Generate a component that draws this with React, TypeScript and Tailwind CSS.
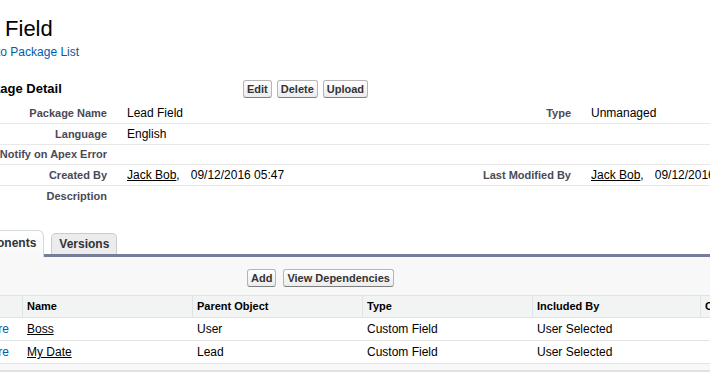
import React from 'react';

const Btn: React.FC<{ children: React.ReactNode }> = ({ children }) => (
  <button className="h-[18px] px-[3px] border border-[#b5b5b5] border-b-[#7f7f7f] rounded-[3px] bg-linear-to-b from-white to-[#ececec] text-[11px] leading-[14px] font-bold text-[#333]">
    {children}
  </button>
);

const details = [
  { label: 'Package Name', value: 'Lead Field', label2: 'Type', value2: 'Unmanaged', h: 'h-[20px]' },
  { label: 'Language', value: 'English', label2: '', value2: '', h: 'h-[20px]' },
  { label: 'Notify on Apex Error', value: '', label2: '', value2: '', h: 'h-[19px]' },
  { label: 'Created By', value: 'user', label2: 'Last Modified By', value2: 'user', h: 'h-[20px]' },
  { label: 'Description', value: '', label2: '', value2: '', h: 'h-[20px]' },
];

const components = [
  { name: 'Boss', parent: 'User', type: 'Custom Field', includedBy: 'User Selected' },
  { name: 'My Date', parent: 'Lead', type: 'Custom Field', includedBy: 'User Selected' },
];

const UserStamp = () => (
  <span className="whitespace-nowrap">
    <a className="underline text-black">Jack Bob</a>,<span className="ml-[11px]">09/12/2016 05:47</span>
  </span>
);

const App: React.FC = () => {
  return (
    <div className="w-[710px] h-[373px] overflow-hidden bg-white text-black font-['Liberation_Sans',Arial,sans-serif]">
      <div className="-ml-[60px] w-[960px]">
        <h1 className="pl-[10px] pt-[16px] text-[22px] leading-[26px] font-normal">Lead Field</h1>
        <div className="mt-[3px] pl-[17px] text-[12px] leading-[15px]">
          <a className="text-[#015ba7]">« Back to Package List</a>
        </div>

        {/* detail block header */}
        <div className="mt-[20px] flex items-center h-[18px]">
          <h2 className="w-[303px] shrink-0 pl-[30px] text-[13px] font-bold">Package Detail</h2>
          <div className="flex gap-[5px]">
            <Btn>Edit</Btn>
            <Btn>Delete</Btn>
            <Btn>Upload</Btn>
          </div>
        </div>

        <div className="mt-[5px]">
          {details.map((d, i) => (
            <div
              key={d.label}
              className={`flex items-center ${d.h} ${i < details.length - 1 ? 'border-b border-[#e8e8e8]' : ''} box-content`}
            >
              <div className="w-[177px] shrink-0 pr-[10px] text-right text-[11px] font-bold text-[#4a4a56] whitespace-nowrap">{d.label}</div>
              <div className="w-[283px] shrink-0 pl-[10px] text-[12px]">{d.value === 'user' ? <UserStamp /> : d.value}</div>
              <div className="w-[181px] shrink-0 pr-[10px] text-right text-[11px] font-bold text-[#4a4a56] whitespace-nowrap">{d.label2}</div>
              <div className="flex-1 pl-[10px] text-[12px] whitespace-nowrap">{d.value2 === 'user' ? <UserStamp /> : d.value2}</div>
            </div>
          ))}
        </div>

        {/* tabs */}
        <div className="mt-[24px] flex items-end h-[27px] pl-[15px] border-b-[3px] border-[#747e96]">
          <div className="h-[27px] -mb-[3px] px-[7px] pt-[5px] rounded-t-[6px] border border-b-0 border-[#d4dadc] bg-linear-to-b from-white to-[#f8f8f8] text-[12px] leading-[15px] font-bold text-[#333]">
            Components
          </div>
          <div className="ml-[7px] h-[21px] px-[7px] flex items-center rounded-t-[5px] border border-b-0 border-[#c9cccf] bg-[#ececec] text-[12px] leading-[15px] font-bold text-[#333]">
            Versions
          </div>
        </div>

        <div className="bg-[#f8f8f8] pt-[12px]">
          <div className="flex gap-[7px] pl-[307px]">
            <Btn>Add</Btn>
            <Btn>View Dependencies</Btn>
          </div>

          <div className="mt-[8px] border-t border-[#e0e3e5]">
            <div className="flex h-[22px] items-center bg-[#f2f3f3] border-b border-[#e0e3e5] text-[11px] font-bold">
              <div className="w-[82px] shrink-0 h-full" />
              <div className="w-[170px] shrink-0 h-full flex items-center pl-[4px] border-l border-[#e0e3e5]">Name</div>
              <div className="w-[170px] shrink-0 h-full flex items-center pl-[4px] border-l border-[#e0e3e5]">Parent Object</div>
              <div className="w-[170px] shrink-0 h-full flex items-center pl-[4px] border-l border-[#e0e3e5]">Type</div>
              <div className="w-[168px] shrink-0 h-full flex items-center pl-[4px] border-l border-[#e0e3e5]">Included By</div>
              <div className="w-[130px] shrink-0 h-full flex items-center pl-[4px] border-l border-[#e0e3e5] whitespace-nowrap">Owned By</div>
            </div>
            {components.map((c) => (
              <div key={c.name} className="flex h-[23px] items-center bg-white border-b border-[#e3e3e3] text-[12px]">
                <div className="w-[82px] shrink-0 pr-[13px] text-right">
                  <a className="text-[#015ba7]">Configure</a>
                </div>
                <div className="w-[170px] shrink-0 pl-[5px]">
                  <a className="underline text-black">{c.name}</a>
                </div>
                <div className="w-[170px] shrink-0 pl-[5px]">{c.parent}</div>
                <div className="w-[170px] shrink-0 pl-[5px]">{c.type}</div>
                <div className="w-[168px] shrink-0 pl-[5px]">{c.includedBy}</div>
                <div className="w-[130px] shrink-0 pl-[5px]" />
              </div>
            ))}
            <div className="h-[8px] border-b-2 border-[#dfe1e3]" />
          </div>
        </div>
      </div>
    </div>
  );
};

export default App;
